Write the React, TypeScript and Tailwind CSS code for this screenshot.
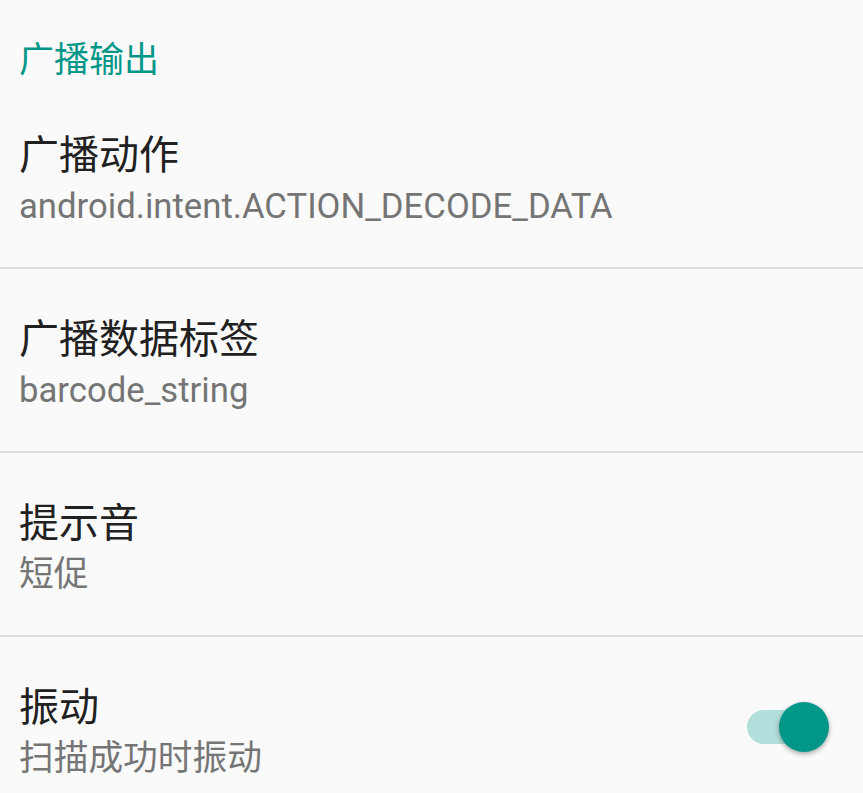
import React from "react";

const font = { fontFamily: "Roboto, 'Noto Sans CJK SC', sans-serif" };

type Pref = { title: string; summary: string; toggle?: boolean };

const prefs: Pref[] = [
  { title: "广播动作", summary: "android.intent.ACTION_DECODE_DATA" },
  { title: "广播数据标签", summary: "barcode_string" },
  { title: "提示音", summary: "短促" },
  { title: "振动", summary: "扫描成功时振动", toggle: true },
];

function Toggle() {
  return (
    <div className="relative w-[82px] h-[50px] flex items-center">
      <div className="w-[74px] h-[34px] rounded-full bg-[#b2dfdb]" />
      <div className="absolute right-0 top-0 w-[50px] h-[50px] rounded-full bg-[#009688] shadow-[0_2px_5px_rgba(0,0,0,0.35)]" />
    </div>
  );
}

function Row({ p, last }: { p: Pref; last: boolean }) {
  return (
    <div
      className={`flex items-start justify-between pl-[19px] pr-[34px] h-[184px] ${
        last ? "" : "border-b-2 border-[#dcdcdc]"
      }`}
    >
      <div className="flex flex-col pt-[46px]">
        <div className="text-[40px] leading-[50px] text-[#212121]">{p.title}</div>
        <div className="text-[34.7px] leading-[50px] text-[#757575]">{p.summary}</div>
      </div>
      {p.toggle && (
        <div className="pt-[65px]">
          <Toggle />
        </div>
      )}
    </div>
  );
}

export default function App() {
  return (
    <div className="w-[863px] h-[793px] overflow-hidden bg-[#fafafa]" style={font}>
      <div className="h-[85px] pl-[19px] pt-[39px]">
        <div className="text-[35px] leading-[44px] text-[#009688]">广播输出</div>
      </div>
      {prefs.map((p, i) => (
        <Row key={p.title} p={p} last={i === prefs.length - 1} />
      ))}
    </div>
  );
}
